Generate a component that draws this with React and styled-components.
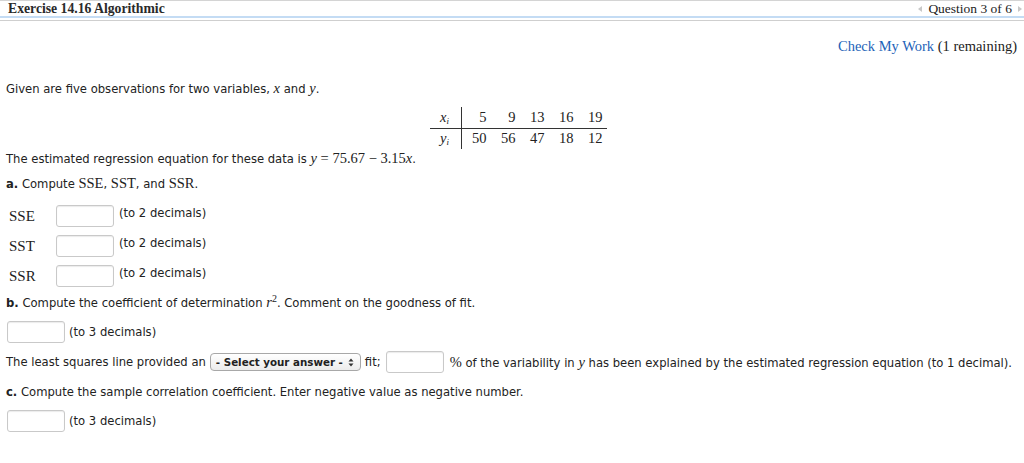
import React from "react";
import styled, { createGlobalStyle } from "styled-components";

const Global = createGlobalStyle`
  html, body { margin: 0; padding: 0; background: #fff; }
  body { font-family: "DejaVu Sans", Verdana, sans-serif; font-size: 11.6px; color: #222; }
`;

const HeaderBar = styled.div`
  display: flex;
  align-items: center;
  justify-content: space-between;
  height: 15px;
  border-top: 1px solid #d4d4d4;
  border-bottom: 2px solid #c4dcf4;
  padding: 0 2px 0 8px;
  font-family: "Liberation Serif", serif;
  font-size: 13.5px;
  color: #222;
`;

const Title = styled.div`
  font-weight: bold;
  font-size: 13.7px;
  line-height: 15px;
  color: #2a2a2a;
`;

const QNav = styled.div`
  display: flex;
  align-items: center;
  gap: 6px;
  line-height: 15px;
`;

const Tri = styled.span`
  width: 0;
  height: 0;
  border-top: 3px solid transparent;
  border-bottom: 3px solid transparent;
  ${(p) => (p.$dir === "left" ? "border-right: 4px solid #c8c8c8;" : "border-left: 4px solid #c8c8c8;")}
`;

const Rule = styled.div`
  margin-top: 2px;
  border-top: 1px solid #cfcfcf;
`;

const CheckRow = styled.div`
  margin-top: 17px;
  text-align: right;
  padding-right: 7px;
  line-height: 16px;
  font-family: "Liberation Serif", serif;
  font-size: 14.5px;
  color: #222;
`;

const CheckLink = styled.span`
  color: #1d63b8;
`;

const Content = styled.div`
  padding-left: 6px;
  padding-right: 6px;
`;

const Line = styled.div`
  margin-top: ${(p) => p.$mt}px;
  line-height: 16px;
  height: 16px;
  white-space: nowrap;
`;

const M = styled.span`
  font-family: "Liberation Serif", "DejaVu Serif", serif;
  font-size: 14.5px;
  font-style: ${(p) => (p.$i ? "italic" : "normal")};
`;

const Sup = styled.sup`
  font-family: "Liberation Serif", serif;
  font-size: 10px;
  line-height: 0;
  vertical-align: 5px;
`;

const B = styled.b`
  font-weight: bold;
`;

const DataTable = styled.table`
  margin: 11px auto 0;
  border-collapse: collapse;
  position: relative;
  left: 6px;
  font-family: "Liberation Serif", serif;
  font-size: 14.5px;
`;

const Row = styled.tr`
  height: 21px;
  ${(p) => (p.$first ? "border-bottom: 1px solid #333;" : "")}
`;

const HeadCell = styled.td`
  box-sizing: border-box;
  width: 32px;
  font-style: italic;
  text-align: right;
  padding: 0 12px 0 0;
  border-right: 1px solid #333;
`;

const Sub = styled.sub`
  font-size: 9px;
  vertical-align: -2px;
  line-height: 0;
`;

const Cell = styled.td`
  box-sizing: border-box;
  width: 29px;
  text-align: right;
  padding: 0 4px 0 0;
`;

const FieldRow = styled.div`
  display: flex;
  align-items: ${(p) => (p.$top ? "flex-start" : "center")};
  margin-top: ${(p) => p.$mt}px;
  height: 22px;
`;

const Label = styled.div`
  width: 47px;
  padding-left: 3px;
  line-height: 22px;
  font-family: "Liberation Serif", serif;
  font-size: 15px;
`;

const Input = styled.div`
  box-sizing: border-box;
  width: 58px;
  height: 22px;
  flex: none;
  border: 1px solid #c9c9c9;
  border-radius: 3px;
  box-shadow: inset 0 1px 1px rgba(0, 0, 0, 0.08);
  background: #fff;
  margin: ${(p) => p.$m || "0"};
`;

const Note = styled.div`
  margin-left: ${(p) => p.$ml}px;
  line-height: 16px;
`;

const Inline = styled.span`
  white-space: nowrap;
`;

const Select = styled.div`
  box-sizing: border-box;
  display: flex;
  flex: none;
  align-items: center;
  justify-content: space-between;
  width: 151px;
  height: 18px;
  margin: 0 4px 0 4px;
  padding: 0 6px 0 5px;
  border: 1px solid #a8a8a8;
  border-radius: 4px;
  background: linear-gradient(#ffffff, #ececec);
  font-size: 10.3px;
  font-weight: bold;
  color: #222;
`;

const Arrows = () => (
  <svg width="6" height="9" viewBox="0 0 6 9">
    <path d="M0.5 3.5 L3 0.5 L5.5 3.5 Z M0.5 5.5 L3 8.5 L5.5 5.5 Z" fill="#333" />
  </svg>
);

export default function App() {
  return (
    <>
      <Global />
      <HeaderBar>
        <Title>Exercise 14.16 Algorithmic</Title>
        <QNav>
          <Tri $dir="left" />
          <span>Question 3 of 6</span>
          <Tri $dir="right" />
        </QNav>
      </HeaderBar>
      <Rule />
      <CheckRow>
        <CheckLink>Check My Work</CheckLink> (1 remaining)
      </CheckRow>
      <Content>
        <Line $mt={26}>
          Given are five observations for two variables, <M $i>x</M> and <M $i>y</M>.
        </Line>
        <DataTable>
          <tbody>
            <Row $first>
              <HeadCell>
                x<Sub>i</Sub>
              </HeadCell>
              <Cell>5</Cell>
              <Cell>9</Cell>
              <Cell>13</Cell>
              <Cell>16</Cell>
              <Cell>19</Cell>
            </Row>
            <Row>
              <HeadCell>
                y<Sub>i</Sub>
              </HeadCell>
              <Cell>50</Cell>
              <Cell>56</Cell>
              <Cell>47</Cell>
              <Cell>18</Cell>
              <Cell>12</Cell>
            </Row>
          </tbody>
        </DataTable>
        <Line $mt={1}>
          The estimated regression equation for these data is <M $i>y</M> <M>= 75.67 − 3.15</M>
          <M $i>x</M>.
        </Line>
        <Line $mt={9}>
          <B>a.</B> Compute <M>SSE</M>, <M>SST</M>, and <M>SSR</M>.
        </Line>
        <FieldRow $mt={14} $top>
          <Label>SSE</Label>
          <Input />
          <Note $ml={5}>(to 2 decimals)</Note>
        </FieldRow>
        <FieldRow $mt={8} $top>
          <Label>SST</Label>
          <Input />
          <Note $ml={5}>(to 2 decimals)</Note>
        </FieldRow>
        <FieldRow $mt={8} $top>
          <Label>SSR</Label>
          <Input />
          <Note $ml={5}>(to 2 decimals)</Note>
        </FieldRow>
        <Line $mt={7}>
          <B>b.</B> Compute the coefficient of determination <M $i>r</M>
          <Sup>2</Sup>. Comment on the goodness of fit.
        </Line>
        <FieldRow $mt={11}>
          <Input $m="0 0 0 1px" />
          <Note $ml={4}>(to 3 decimals)</Note>
        </FieldRow>
        <FieldRow $mt={8}>
          <Inline>The least squares line provided an</Inline>
          <Select>
            <span>- Select your answer -</span>
            <Arrows />
          </Select>
          <Inline>fit;</Inline>
          <Input $m="0 6px 0 5px" />
          <Inline>
            <M>%</M> of the variability in <M $i>y</M> has been explained by the estimated regression equation (to 1
            decimal).
          </Inline>
        </FieldRow>
        <Line $mt={11}>
          <B>c.</B> Compute the sample correlation coefficient. Enter negative value as negative number.
        </Line>
        <FieldRow $mt={10}>
          <Input $m="0 0 0 1px" />
          <Note $ml={4}>(to 3 decimals)</Note>
        </FieldRow>
      </Content>
    </>
  );
}
